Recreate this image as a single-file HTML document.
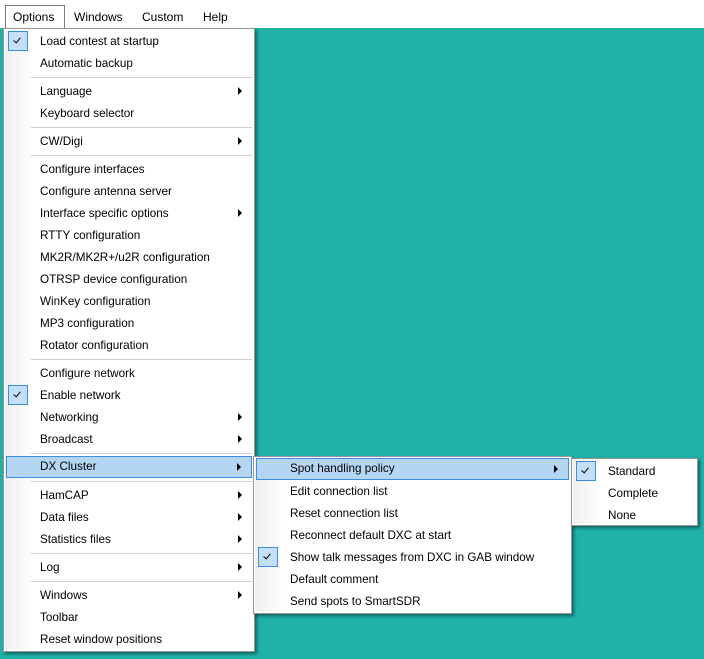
<!DOCTYPE html>
<html><head><meta charset="utf-8"><style>
*{margin:0;padding:0;box-sizing:border-box}
body{width:704px;height:659px;background:#20b1a9;position:relative;overflow:hidden;font-family:"Liberation Sans",sans-serif;font-size:11.7px;color:#000}
.bar{position:absolute;left:0;top:0;width:704px;height:28px;background:#fff;font-size:12px}
.bar span{position:absolute;top:10px}
.opt{position:absolute;left:5px;top:5px;width:60px;height:24px;border:1px solid #7a7a7a;border-bottom:none;background:#fff}
.menu{position:absolute;background:#fff;border:1px solid #979797;box-shadow:2px 2px 3px rgba(0,0,0,.45)}
.gut{position:absolute;left:1px;top:1px;bottom:1px;width:26px;background:linear-gradient(to right,#f0f0f0,#fcfcfc)}
.it{position:absolute;left:2px;right:2px;height:22px;line-height:22px}
.it.hl{background:#b5d6f3;border:1px solid #3d8de0;line-height:20px}
.it .t{position:absolute;top:1px}
.ar{position:absolute;right:10px;top:7px;width:0;height:0;border-top:4px solid transparent;border-bottom:4px solid transparent;border-left:4px solid #000}
.hl .ar{top:6px}
.sep{position:absolute;left:27px;right:2px;height:1px;background:#cdcdcd}
.ck{position:absolute;left:2px;top:1px;width:20px;height:20px;background:#c4e0f8;border:1px solid #3d8de0}
.ck:after{content:"";position:absolute;left:6px;top:4px;width:3px;height:6px;border-right:1.5px solid #000;border-bottom:1.5px solid #000;transform:rotate(40deg)}
</style></head><body>
<div class="bar">
<div class="opt"></div>
<span style="left:13px">Options</span><span style="left:74px">Windows</span><span style="left:142px">Custom</span><span style="left:203px">Help</span>
</div>

<div class="menu" style="left:3px;top:28px;width:252px;height:624px">
<div class="gut"></div>
<div class="it" style="top:1px"><div class="ck"></div><span class="t" style="left:34px">Load contest at startup</span></div>
<div class="it" style="top:23px"><span class="t" style="left:34px">Automatic backup</span></div>
<div class="sep" style="top:48px"></div>
<div class="it" style="top:51px"><span class="t" style="left:34px">Language</span><i class="ar"></i></div>
<div class="it" style="top:73px"><span class="t" style="left:34px">Keyboard selector</span></div>
<div class="sep" style="top:98px"></div>
<div class="it" style="top:101px"><span class="t" style="left:34px">CW/Digi</span><i class="ar"></i></div>
<div class="sep" style="top:126px"></div>
<div class="it" style="top:129px"><span class="t" style="left:34px">Configure interfaces</span></div>
<div class="it" style="top:151px"><span class="t" style="left:34px">Configure antenna server</span></div>
<div class="it" style="top:173px"><span class="t" style="left:34px">Interface specific options</span><i class="ar"></i></div>
<div class="it" style="top:195px"><span class="t" style="left:34px">RTTY configuration</span></div>
<div class="it" style="top:217px"><span class="t" style="left:34px">MK2R/MK2R+/u2R configuration</span></div>
<div class="it" style="top:239px"><span class="t" style="left:34px">OTRSP device configuration</span></div>
<div class="it" style="top:261px"><span class="t" style="left:34px">WinKey configuration</span></div>
<div class="it" style="top:283px"><span class="t" style="left:34px">MP3 configuration</span></div>
<div class="it" style="top:305px"><span class="t" style="left:34px">Rotator configuration</span></div>
<div class="sep" style="top:330px"></div>
<div class="it" style="top:333px"><span class="t" style="left:34px">Configure network</span></div>
<div class="it" style="top:355px"><div class="ck"></div><span class="t" style="left:34px">Enable network</span></div>
<div class="it" style="top:377px"><span class="t" style="left:34px">Networking</span><i class="ar"></i></div>
<div class="it" style="top:399px"><span class="t" style="left:34px">Broadcast</span><i class="ar"></i></div>
<div class="sep" style="top:424px"></div>
<div class="it hl" style="top:427px"><span class="t" style="left:33px;top:0">DX Cluster</span><i class="ar"></i></div>
<div class="sep" style="top:452px"></div>
<div class="it" style="top:455px"><span class="t" style="left:34px">HamCAP</span><i class="ar"></i></div>
<div class="it" style="top:477px"><span class="t" style="left:34px">Data files</span><i class="ar"></i></div>
<div class="it" style="top:499px"><span class="t" style="left:34px">Statistics files</span><i class="ar"></i></div>
<div class="sep" style="top:524px"></div>
<div class="it" style="top:527px"><span class="t" style="left:34px">Log</span><i class="ar"></i></div>
<div class="sep" style="top:552px"></div>
<div class="it" style="top:555px"><span class="t" style="left:34px">Windows</span><i class="ar"></i></div>
<div class="it" style="top:577px"><span class="t" style="left:34px">Toolbar</span></div>
<div class="it" style="top:599px"><span class="t" style="left:34px">Reset window positions</span></div>
</div>

<div class="menu" style="left:253px;top:456px;width:319px;height:158px">
<div class="gut"></div>
<div class="it hl" style="top:1px"><span class="t" style="left:33px;top:0">Spot handling policy</span><i class="ar"></i></div>
<div class="it" style="top:23px"><span class="t" style="left:34px">Edit connection list</span></div>
<div class="it" style="top:45px"><span class="t" style="left:34px">Reset connection list</span></div>
<div class="it" style="top:67px"><span class="t" style="left:34px">Reconnect default DXC at start</span></div>
<div class="it" style="top:89px"><div class="ck"></div><span class="t" style="left:34px">Show talk messages from DXC in GAB window</span></div>
<div class="it" style="top:111px"><span class="t" style="left:34px">Default comment</span></div>
<div class="it" style="top:133px"><span class="t" style="left:34px">Send spots to SmartSDR</span></div>
</div>

<div class="menu" style="left:571px;top:458px;width:127px;height:68px">
<div class="gut"></div>
<div class="it" style="top:1px"><div class="ck"></div><span class="t" style="left:34px">Standard</span></div>
<div class="it" style="top:23px"><span class="t" style="left:34px">Complete</span></div>
<div class="it" style="top:45px"><span class="t" style="left:34px">None</span></div>
</div>
</body></html>
